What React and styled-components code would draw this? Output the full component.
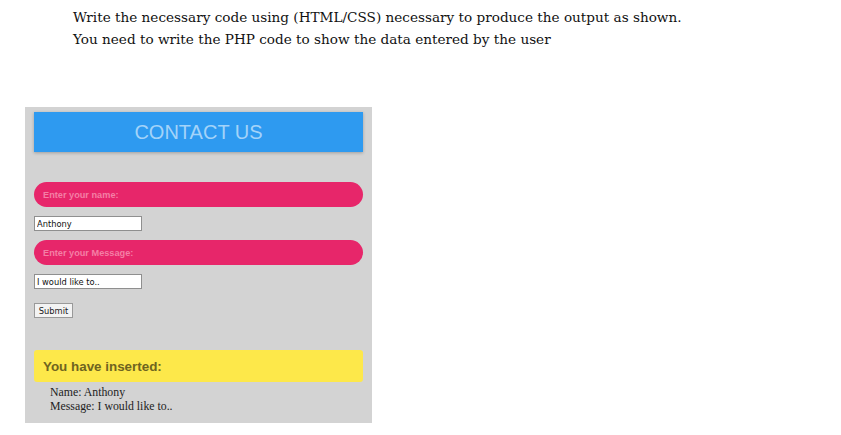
import styled, { createGlobalStyle } from "styled-components";

const GlobalStyle = createGlobalStyle`
  html, body {
    margin: 0;
    padding: 0;
    background: #ffffff;
  }
  body {
    font-family: "DejaVu Serif", "Liberation Serif", serif;
  }
`;

export default function App() {
  return (
    <>
      <GlobalStyle />
      <Page>
        <Intro>
          <IntroLine>Write the necessary code using (HTML/CSS) necessary to produce the output as shown.</IntroLine>
          <IntroLine>You need to write the PHP code to show the data entered by the user</IntroLine>
        </Intro>

        <Panel>
          <Header>CONTACT US</Header>

          <Form>
            <Pill>Enter your name:</Pill>
            <TextInput defaultValue="Anthony" />
            <Pill>Enter your Message:</Pill>
            <TextInput defaultValue="I would like to.." />
            <SubmitButton type="button">Submit</SubmitButton>
          </Form>

          <Result>You have inserted:</Result>
          <Output>
            <div>Name: Anthony</div>
            <div>Message: I would like to..</div>
          </Output>
        </Panel>
      </Page>
    </>
  );
}

const Page = styled.div`
  display: flex;
  flex-direction: column;
  height: 435px;
  overflow: hidden;
`;

const Intro = styled.div`
  padding: 6px 0 0 73px;
`;

const IntroLine = styled.p`
  margin: 0;
  font-family: "DejaVu Serif", serif;
  font-size: 13.6px;
  line-height: 22px;
  color: #111;
`;

const Panel = styled.div`
  margin: 57px 0 0 25px;
  width: 347px;
  height: 316px;
  box-sizing: border-box;
  padding: 5px 9px 0;
  background: #d3d3d3;
  display: flex;
  flex-direction: column;
`;

const Header = styled.div`
  height: 40px;
  background: #2e9af0;
  box-shadow: 0 1px 3px rgba(0, 0, 0, 0.25);
  color: #a3d3f9;
  font-family: "Liberation Sans", Arial, sans-serif;
  font-size: 20px;
  display: flex;
  align-items: center;
  justify-content: center;
`;

const Form = styled.div`
  margin-top: 30px;
  display: flex;
  flex-direction: column;
  align-items: flex-start;
`;

const Pill = styled.div`
  align-self: stretch;
  height: 25px;
  box-sizing: border-box;
  padding-left: 9px;
  border-radius: 13px;
  background: #e7266a;
  color: #f47fa5;
  font-family: "Liberation Sans", Arial, sans-serif;
  font-weight: bold;
  font-size: 9.2px;
  display: flex;
  align-items: center;
  margin-bottom: 9px;
`;

const TextInput = styled.input`
  width: 108px;
  height: 15px;
  box-sizing: border-box;
  padding: 0 2px;
  border: 1px solid #8f8f8f;
  background: #fff;
  font-family: "DejaVu Sans", Verdana, sans-serif;
  font-size: 8.3px;
  color: #111;
  margin-bottom: 9px;
  outline: none;
`;

const SubmitButton = styled.button`
  margin-top: 5px;
  width: 39px;
  height: 15px;
  padding: 0;
  box-sizing: border-box;
  border: 1px solid #999;
  background: #f3f3f3;
  font-family: "DejaVu Sans", Verdana, sans-serif;
  font-size: 8.3px;
  color: #222;
`;

const Result = styled.div`
  margin-top: 32px;
  height: 32px;
  box-sizing: border-box;
  padding-left: 9px;
  border-radius: 3px;
  background: #fde84a;
  color: #6f6420;
  font-family: "Liberation Sans", Arial, sans-serif;
  font-weight: bold;
  font-size: 13.4px;
  display: flex;
  align-items: center;
`;

const Output = styled.div`
  padding: 3px 0 0 16px;
  font-family: "Liberation Serif", "Times New Roman", serif;
  font-size: 11.8px;
  line-height: 14px;
  color: #222;
`;
